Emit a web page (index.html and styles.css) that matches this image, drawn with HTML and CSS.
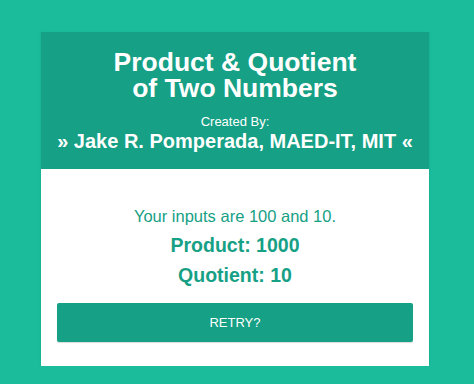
FILE: index.html
```html
<!DOCTYPE html>
<html lang="en">
<head>
  <meta charset="UTF-8">
  <title>Product &amp; Quotient of Two Numbers</title>
  <link rel="stylesheet" href="styles.css">
</head>
<body>
  <div class="card">
    <div class="card-header">
      <h1 class="title">Product &amp; Quotient<br>of Two Numbers</h1>
      <div class="created">Created By:</div>
      <div class="author">&raquo; Jake R. Pomperada, MAED-IT, MIT &laquo;</div>
    </div>
    <div class="card-body">
      <p class="inputs">Your inputs are 100 and 10.</p>
      <p class="result">Product: 1000</p>
      <p class="result">Quotient: 10</p>
      <button class="retry">RETRY?</button>
    </div>
  </div>
</body>
</html>
```

FILE: styles.css
```css
* { box-sizing: border-box; font-family: "Liberation Sans", Arial, sans-serif; }
body { margin: 0; padding: 0; background: #1abc9c; }

.card {
  width: 388px;
  margin: 32px 0 0 41px;
  background: #fff;
  box-shadow: 0 1px 2px rgba(0,0,0,0.12);
}

.card-header {
  background-color: #16a085;
  color: white;
  text-align: center;
  padding: 17px 0 16px;
}

.title {
  margin: 0;
  font-size: 26.5px;
  line-height: 26px;
  font-weight: bold;
}

.created {
  margin-top: 13px;
  font-size: 13px;
  line-height: 15px;
}

.author {
  margin-top: 1px;
  font-size: 20px;
  line-height: 23px;
  font-weight: bold;
}

.card-body {
  padding: 37px 16px 24px;
  text-align: center;
  color: #16a085;
}

.inputs {
  margin: 0 0 4px;
  font-size: 16.5px;
  line-height: 20px;
}

.result {
  margin: 0;
  font-size: 19.5px;
  line-height: 30px;
  font-weight: bold;
}

.retry {
  display: block;
  width: 100%;
  height: 39px;
  margin-top: 13px;
  background-color: #16a085;
  color: white;
  border: none;
  border-radius: 2px;
  font-size: 13px;
  box-shadow: 0 1px 1px rgba(0,0,0,0.15);
  cursor: pointer;
}
```
